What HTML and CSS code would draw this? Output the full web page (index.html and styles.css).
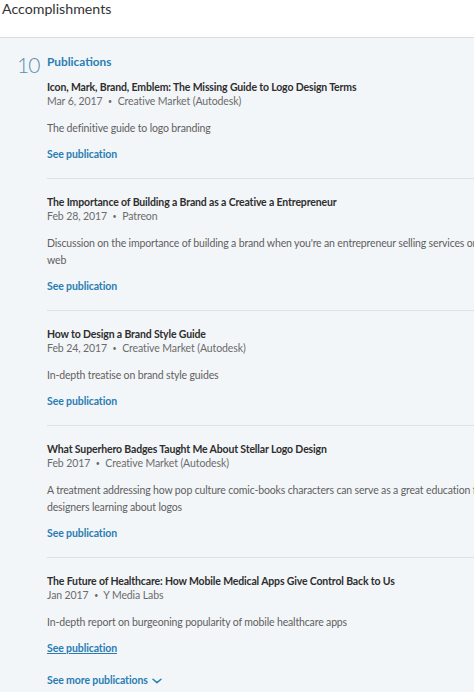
FILE: index.html
```html
<!DOCTYPE html>
<html lang="en">
<head>
<meta charset="utf-8">
<title>Accomplishments</title>
<link rel="stylesheet" href="styles.css">
</head>
<body>
<h2 class="page-title">Accomplishments</h2>
<section class="panel">
  <div class="count">10</div>
  <div class="content">
    <h3 class="section-title">Publications</h3>
    <ul class="pubs">
      <li class="pub">
        <div class="pub-title">Icon, Mark, Brand, Emblem: The Missing Guide to Logo Design Terms</div>
        <div class="pub-meta">Mar 6, 2017 <span class="dot">•</span> Creative Market (Autodesk)</div>
        <p class="pub-desc">The definitive guide to logo branding</p>
        <a class="pub-link" href="#">See publication</a>
      </li>
      <li class="pub">
        <div class="pub-title">The Importance of Building a Brand as a Creative a Entrepreneur</div>
        <div class="pub-meta">Feb 28, 2017 <span class="dot">•</span> Patreon</div>
        <p class="pub-desc">Discussion on the importance of building a brand when you're an entrepreneur selling services on the web</p>
        <a class="pub-link" href="#">See publication</a>
      </li>
      <li class="pub">
        <div class="pub-title">How to Design a Brand Style Guide</div>
        <div class="pub-meta">Feb 24, 2017 <span class="dot">•</span> Creative Market (Autodesk)</div>
        <p class="pub-desc">In-depth treatise on brand style guides</p>
        <a class="pub-link" href="#">See publication</a>
      </li>
      <li class="pub">
        <div class="pub-title">What Superhero Badges Taught Me About Stellar Logo Design</div>
        <div class="pub-meta">Feb 2017 <span class="dot">•</span> Creative Market (Autodesk)</div>
        <p class="pub-desc">A treatment addressing how pop culture comic-books characters can serve as a great education for designers learning about logos</p>
        <a class="pub-link" href="#">See publication</a>
      </li>
      <li class="pub">
        <div class="pub-title">The Future of Healthcare: How Mobile Medical Apps Give Control Back to Us</div>
        <div class="pub-meta">Jan 2017 <span class="dot">•</span> Y Media Labs</div>
        <p class="pub-desc">In-depth report on burgeoning popularity of mobile healthcare apps</p>
        <a class="pub-link underlined" href="#">See publication</a>
      </li>
    </ul>
    <a class="see-more" href="#">See more publications
      <svg class="chev" width="10" height="6" viewBox="0 0 10 6"><path d="M1 1.2 L5 4.6 L9 1.2" fill="none" stroke="#2a7fb3" stroke-width="1.5" stroke-linecap="round" stroke-linejoin="round"/></svg>
    </a>
  </div>
</section>
</body>
</html>
```

FILE: styles.css
```css
html, body {
  margin: 0;
  padding: 0;
  background: #ffffff;
  overflow: hidden;
  font-family: Lato, "Liberation Sans", sans-serif;
}

.page-title {
  margin: 0;
  padding: 0 0 0 2px;
  height: 37px;
  font-size: 14.2px;
  line-height: 17px;
  font-weight: 400;
  color: #333333;
}

.panel {
  width: 500px;
  box-sizing: border-box;
  border-top: 1px solid #dadde0;
  background: #f3f6f8;
  display: grid;
  grid-template-columns: 47px 1fr;
  padding: 16px 0 4px 0;
}

.count {
  padding-left: 17px;
  font-size: 21px;
  line-height: 22px;
  letter-spacing: -1px;
  font-weight: 300;
  color: #5b8fb0;
}

.content {
  min-width: 0;
  line-height: 16px;
}

.section-title {
  margin: 0;
  font-size: 11.8px;
  line-height: 16px;
  font-weight: 700;
  color: #2a7db3;
}

.pubs {
  list-style: none;
  margin: 10px 0 0 0;
  padding: 0;
}

.pub {
  padding-bottom: 16px;
  border-bottom: 1px solid #dfe2e5;
  margin-bottom: 16px;
}

.pub:last-child {
  border-bottom: none;
  margin-bottom: 0;
}

.pub-title {
  font-size: 10.5px;
  line-height: 14px;
  letter-spacing: -0.15px;
  font-weight: 700;
  color: #2e2e2e;
  white-space: nowrap;
}

.pub-meta {
  font-size: 10.5px;
  line-height: 14px;
  letter-spacing: -0.1px;
  color: #6b6b6b;
}

.dot {
  font-size: 7px;
  margin: 0 3px;
  vertical-align: 1px;
}

.pub-desc {
  margin: 12px 0 9px 0;
  font-size: 10.5px;
  line-height: 17px;
  letter-spacing: -0.15px;
  color: #5f5f5f;
}

.pub-link {
  display: block;
  width: fit-content;
  font-size: 10.5px;
  line-height: 16px;
  letter-spacing: -0.1px;
  font-weight: 700;
  color: #2a7db3;
  text-decoration: none;
}

.pub-link.underlined {
  text-decoration: underline;
}

.see-more {
  display: flex;
  width: fit-content;
  align-items: center;
  gap: 4px;
  font-size: 10.5px;
  line-height: 16px;
  letter-spacing: -0.1px;
  font-weight: 700;
  color: #2a7db3;
  text-decoration: none;
}

.chev {
  margin-top: 2px;
}
```
